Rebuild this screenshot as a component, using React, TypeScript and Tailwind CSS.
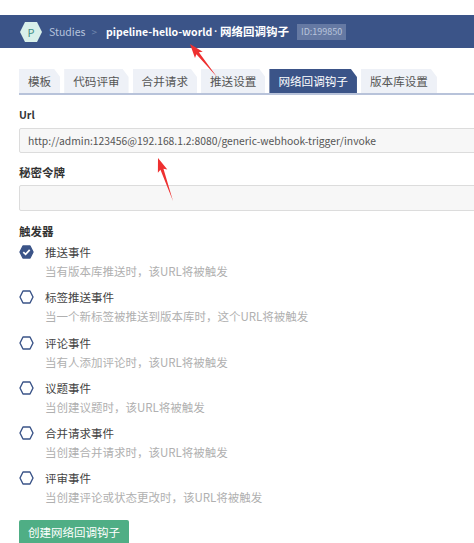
const FONT = "font-['Noto_Sans_CJK_SC',sans-serif]";

const tabs = ['模板', '代码评审', '合并请求', '推送设置', '网络回调钩子', '版本库设置'];

const triggers = [
  { title: '推送事件', desc: '当有版本库推送时，该URL将被触发', checked: true },
  { title: '标签推送事件', desc: '当一个新标签被推送到版本库时，这个URL将被触发' },
  { title: '评论事件', desc: '当有人添加评论时，该URL将被触发' },
  { title: '议题事件', desc: '当创建议题时，该URL将被触发' },
  { title: '合并请求事件', desc: '当创建合并请求时，该URL将被触发' },
  { title: '评审事件', desc: '当创建评论或状态更改时，该URL将被触发' },
];

function Hex({ checked }: { checked?: boolean }) {
  return (
    <svg width="15" height="14" viewBox="0 0 15 14" className="shrink-0">
      <polygon
        points="4,1 11,1 14,7 11,13 4,13 1,7"
        fill={checked ? '#3b5488' : 'none'}
        stroke="#3b5488"
        strokeWidth="1.4"
        strokeLinejoin="round"
      />
      {checked && <path d="M4.3 7.2 L6.6 9.4 L10.7 4.9" fill="none" stroke="#fff" strokeWidth="1.7" />}
    </svg>
  );
}

function Arrow({ className, x1, y1, x2, y2 }: { className: string; x1: number; y1: number; x2: number; y2: number }) {
  // thin tail widening into a head at x2,y2
  const a = Math.atan2(y2 - y1, x2 - x1);
  const px = (d: number, s: number) => x2 - Math.cos(a) * d - Math.sin(a) * s;
  const py = (d: number, s: number) => y2 - Math.sin(a) * d + Math.cos(a) * s;
  const pts = [
    [x1, y1],
    [px(12, 1.6), py(12, 1.6)],
    [px(14, 5), py(14, 5)],
    [x2, y2],
    [px(14, -5), py(14, -5)],
    [px(12, -1.6), py(12, -1.6)],
  ];
  return (
    <svg width="474" height="543" className={className}>
      <polygon points={pts.map(p => p.join(',')).join(' ')} fill="#ee3030" />
    </svg>
  );
}

export default function App() {
  return (
    <div className={`${FONT} relative w-[474px] h-[543px] overflow-hidden bg-white`}>
      <div className="mt-[15px] h-[33px] bg-[#3b5488] flex items-center pl-[19px] text-white">
        <svg width="24" height="22" viewBox="0 0 24 22" className="shrink-0">
          <polygon points="6,1 18,1 23,11 18,21 6,21 1,11" fill="#d9f0ea" />
          <text x="12" y="15.5" textAnchor="middle" fontSize="11" fill="#3f8f85">P</text>
        </svg>
        <span className="ml-[6px] text-[10.5px] text-[#b6c3dc]">Studies</span>
        <span className="ml-[6px] text-[10px] text-[#6f86ad]">&gt;</span>
        <span className="ml-[9px] text-[10.5px] font-bold whitespace-nowrap">pipeline-hello-world</span>
        <span className="ml-[2px] text-[10.5px] font-['Lato'] whitespace-nowrap">·</span>
        <span className="ml-[3px] text-[11.5px] font-bold whitespace-nowrap">网络回调钩子</span>
        <span className="ml-[8px] h-[16px] px-[4px] bg-[#6579a3] text-[#b9c5dc] text-[9px] leading-[16px] whitespace-nowrap">ID:199850</span>
      </div>

      <div className="mt-[21px] ml-[19px] flex gap-[4px] h-[26px] border-b-2 border-[#b8c3da]">
        {tabs.map(t => (
          <div
            key={t}
            className={`h-[24px] px-[9px] text-[11.6px] leading-[24px] whitespace-nowrap [clip-path:polygon(0_0,calc(100%-6px)_0,100%_8px,100%_100%,0_100%)] ${
              t === '网络回调钩子' ? 'bg-[#3b5488] text-white' : 'bg-[#eef1f7] text-[#555]'
            }`}
          >
            {t}
          </div>
        ))}
      </div>

      <div className="pl-[19px] mt-[12px]">
        <div className="text-[10.5px] font-bold text-[#333] leading-[16px]">Url</div>
        <div className="mt-[5px] h-[25px] -mr-[4px] border border-[#dcdcdc] rounded-l-[2px] bg-[#f7f7f7] pl-[8px] text-[10.35px] leading-[23px] text-[#555] whitespace-nowrap">
          http://admin:123456@192.168.1.2:8080/generic-webhook-trigger/invoke
        </div>
        <div className="mt-[11px] text-[11.5px] font-bold text-[#333] leading-[16px]">秘密令牌</div>
        <div className="mt-[5px] h-[26px] -mr-[4px] border border-[#dcdcdc] rounded-l-[2px] bg-[#f7f7f7]" />
        <div className="mt-[12px] text-[11.5px] font-bold text-[#333] leading-[16px]">触发器</div>

        <div className="mt-[4px] flex flex-col gap-[7.3px]">
          {triggers.map(t => (
            <div key={t.title} className="flex gap-[11px]">
              <div className="pt-[2px]"><Hex checked={t.checked} /></div>
              <div className="leading-[19px]">
                <div className="text-[11.5px] text-[#444] h-[19px]">{t.title}</div>
                <div className="text-[11.5px] text-[#b0b0b0] h-[19px] whitespace-nowrap">{t.desc}</div>
              </div>
            </div>
          ))}
        </div>

        <button className="mt-[13px] h-[24px] w-[110px] bg-[#4fae85] text-white text-[11.5px] rounded-t-[2px]">
          创建网络回调钩子
        </button>
      </div>

      {/* red annotation arrows over the page */}
      <Arrow className="absolute left-0 top-0 pointer-events-none" x1={217} y1={77} x2={190} y2={44} />
      <Arrow className="absolute left-0 top-0 pointer-events-none" x1={173} y1={201} x2={158} y2={158} />
    </div>
  );
}
